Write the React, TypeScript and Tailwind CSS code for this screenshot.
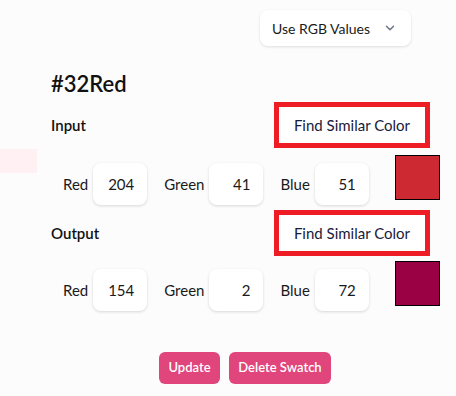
import { ChevronDown } from 'lucide-react';

type Channel = { label: string; value: number };

const rows: { title: string; channels: Channel[]; swatch: string; findGap: string; swatchTop: string; inputTop: string }[] = [
  {
    title: 'Input',
    channels: [
      { label: 'Red', value: 204 },
      { label: 'Green', value: 41 },
      { label: 'Blue', value: 51 },
    ],
    swatch: 'bg-[#cc2933]',
    findGap: 'mt-[4px]',
    swatchTop: 'mt-[7px]',
    inputTop: 'mt-[15px]',
  },
  {
    title: 'Output',
    channels: [
      { label: 'Red', value: 154 },
      { label: 'Green', value: 2 },
      { label: 'Blue', value: 72 },
    ],
    swatch: 'bg-[#9a0044]',
    findGap: 'mt-[5px]',
    swatchTop: 'mt-[5px]',
    inputTop: 'mt-[13px]',
  },
];

function ChannelInput({ label, value, first }: Channel & { first: boolean }) {
  return (
    <div className={`flex items-center shrink-0 ${first ? '' : 'ml-[17px]'}`}>
      <span className="text-[15px] text-[#1a1a1a]">{label}</span>
      <div className="ml-[5px] w-[54px] h-[42px] rounded-lg bg-white shadow-[0_1px_3px_rgba(0,0,0,0.15)] flex items-center justify-end pr-[13px] text-[15px] text-[#1a1a1a]">
        {value}
      </div>
    </div>
  );
}

export default function App() {
  return (
    <div
      className="relative w-[456px] h-[396px] bg-[#fcfcfc] overflow-hidden"
      style={{ fontFamily: '"Lato", "Open Sans", sans-serif' }}
    >
      {/* stray pink fragment at the left edge */}
      <div className="absolute left-0 top-[149px] w-[37px] h-[24px] bg-[#fff0f3]" />

      <div className="flex justify-end pt-[10px] pr-[45px]">
        <button className="w-[151px] h-[36px] rounded-lg bg-white shadow-[0_1px_3px_rgba(0,0,0,0.12)] flex items-center justify-between pl-[12px] pr-[14px] text-[14px] text-[#1a1a1a]">
          Use RGB Values
          <ChevronDown className="w-[14px] h-[14px] text-gray-500" strokeWidth={2.5} />
        </button>
      </div>

      <div className="pl-[51px] pr-[26px]">
        <h1 className="mt-[24px] text-[22px] font-semibold leading-[28px] text-[#111]">#32Red</h1>

        {rows.map(row => (
          <div key={row.title} className={row.findGap}>
            <div className="flex items-center justify-between">
              <span className="text-[15px] font-semibold text-[#111]">{row.title}</span>
              <button className="w-[156px] h-[46px] border-[5px] border-[#ee1c25] bg-white text-[15px] text-[#1a1a3a]">
                Find Similar Color
              </button>
            </div>
            <div className="flex items-start pl-[12px]">
              <div className={`flex items-center shrink-0 ${row.inputTop}`}>
                {row.channels.map((c, i) => (
                  <ChannelInput key={c.label} {...c} first={i === 0} />
                ))}
              </div>
              <div className={`shrink-0 ml-[26px] w-[45px] h-[45px] border border-black ${row.swatch} ${row.swatchTop}`} />
            </div>
          </div>
        ))}
      </div>

      <div className="flex gap-[9px] mt-[41px] pl-[159px]">
        <button className="w-[61px] h-[32px] rounded-md bg-[#e0457b] text-white text-[13px] font-semibold">Update</button>
        <button className="w-[102px] h-[32px] rounded-md bg-[#e0457b] text-white text-[13px] font-semibold">Delete Swatch</button>
      </div>
    </div>
  );
}
